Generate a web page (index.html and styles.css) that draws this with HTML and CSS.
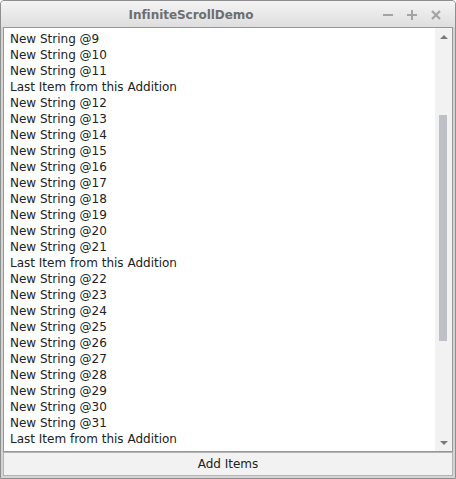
FILE: index.html
```html
<!DOCTYPE html>
<html>
<head>
<meta charset="utf-8">
<link rel="stylesheet" href="styles.css">
</head>
<body>
<div class="window">
  <div class="titlebar">
    <div class="title">InfiniteScrollDemo</div>
    <div class="controls">
      <svg class="ctl" width="10" height="10" viewBox="0 0 10 10"><rect x="0" y="4" width="10" height="2" fill="#a3a3a3"/></svg>
      <svg class="ctl" width="10" height="10" viewBox="0 0 10 10"><rect x="0" y="4" width="10" height="2" fill="#a3a3a3"/><rect x="4" y="0" width="2" height="10" fill="#a3a3a3"/></svg>
      <svg class="ctl" width="10" height="10" viewBox="0 0 10 10"><path d="M1 1 L9 9 M9 1 L1 9" stroke="#a3a3a3" stroke-width="2.2"/></svg>
    </div>
  </div>
  <div class="body">
    <div class="list">
      <div class="items">
        <div class="item">New String @9</div>
        <div class="item">New String @10</div>
        <div class="item">New String @11</div>
        <div class="item">Last Item from this Addition</div>
        <div class="item">New String @12</div>
        <div class="item">New String @13</div>
        <div class="item">New String @14</div>
        <div class="item">New String @15</div>
        <div class="item">New String @16</div>
        <div class="item">New String @17</div>
        <div class="item">New String @18</div>
        <div class="item">New String @19</div>
        <div class="item">New String @20</div>
        <div class="item">New String @21</div>
        <div class="item">Last Item from this Addition</div>
        <div class="item">New String @22</div>
        <div class="item">New String @23</div>
        <div class="item">New String @24</div>
        <div class="item">New String @25</div>
        <div class="item">New String @26</div>
        <div class="item">New String @27</div>
        <div class="item">New String @28</div>
        <div class="item">New String @29</div>
        <div class="item">New String @30</div>
        <div class="item">New String @31</div>
        <div class="item">Last Item from this Addition</div>
      </div>
      <div class="scrollbar">
        <div class="arrow up"></div>
        <div class="track"><div class="thumb"></div></div>
        <div class="arrow down"></div>
      </div>
    </div>
    <div class="button">Add Items</div>
  </div>
</div>
</body>
</html>
```
FILE: styles.css
```css
* { box-sizing: border-box; }
html, body { margin: 0; padding: 0; background: #ffffff; }
body { font-family: "DejaVu Sans", sans-serif; font-size: 12px; color: #222222; }

.window {
  width: 456px;
  height: 479px;
  display: flex;
  flex-direction: column;
  background: #d4d4d4;
  border: 1px solid #8e8e8e;
  border-radius: 4px 4px 0 0;
  overflow: hidden;
}

.titlebar {
  height: 26px;
  flex: none;
  position: relative;
  display: flex;
  align-items: center;
  justify-content: center;
  padding-right: 74px;
  background: linear-gradient(#f4f4f4, #dedede);
}
.title {
  font-weight: bold;
  font-size: 12px;
  color: #6e6e6e;
  padding-top: 1px;
  letter-spacing: -0.05px;
}
.controls {
  position: absolute;
  right: 14px;
  top: 9px;
  display: flex;
  gap: 14px;
}
.ctl { display: block; }

.body {
  flex: 1;
  display: flex;
  flex-direction: column;
  padding: 0 2px 2px 2px;
  min-height: 0;
}

.list {
  height: 425px;
  flex: none;
  display: flex;
  background: #ffffff;
  border: 1px solid #979797;
}
.items {
  flex: 1;
  padding: 3px 0 0 6px;
  overflow: hidden;
}
.item {
  height: 16px;
  line-height: 16px;
  white-space: nowrap;
}

.scrollbar {
  width: 17px;
  flex: none;
  display: flex;
  flex-direction: column;
  background: #f2f2f2;
}
.arrow {
  height: 17px;
  flex: none;
  display: flex;
  align-items: center;
  justify-content: center;
}
.arrow::before {
  content: "";
  width: 0;
  height: 0;
  border-left: 4px solid transparent;
  border-right: 4px solid transparent;
}
.arrow.up::before { border-bottom: 4px solid #7a7a7a; }
.arrow.down::before { border-top: 4px solid #7a7a7a; }
.track {
  flex: 1;
  padding-top: 70px;
}
.thumb {
  width: 8px;
  height: 226px;
  margin-left: 4px;
  background: #bfbfc6;
}

.button {
  height: 24px;
  flex: none;
  display: flex;
  align-items: center;
  justify-content: center;
  background: #f2f2f2;
  border: 1px solid #b4b4b4;
  color: #222222;
}
```
